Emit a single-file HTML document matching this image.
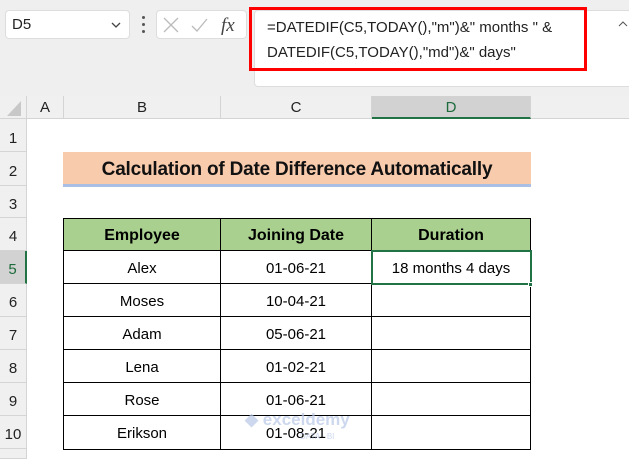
<!DOCTYPE html>
<html><head><style>
*{margin:0;padding:0;box-sizing:border-box}
body{width:629px;height:457px;overflow:hidden;background:#fff;font-family:"Liberation Sans",sans-serif;position:relative}
.a{position:absolute}
.ch{position:absolute;top:96px;height:23px;background:#f0f0f0;border-right:1px solid #d4d4d4;border-bottom:1px solid #d4d4d4;font-size:15px;color:#222;text-align:center;line-height:24px}
.rh{position:absolute;left:0;width:27px;background:#f0f0f0;border-right:1px solid #d4d4d4;border-bottom:1px solid #d4d4d4;font-size:15px;color:#222;text-align:center}
.c{position:absolute;border-right:1px solid #000;border-bottom:1px solid #000;font-size:15px;text-align:center;line-height:35px;color:#000}
</style></head><body>
<div class="a" style="left:0;top:0;width:629px;height:96px;background:#efefef"></div>
<div class="a" style="left:5px;top:10px;width:125px;height:29px;background:#fff;border:1px solid #ddd;border-radius:4px;font-size:15px;line-height:27px;padding-left:6px;color:#222">D5</div>
<svg class="a" style="left:110px;top:20px" width="12" height="10"><path d="M2 3 L6 7 L10 3" stroke="#444" stroke-width="1.3" fill="none"/></svg>
<div class="a" style="left:142px;top:16px;width:3px;height:3px;background:#555;border-radius:50%"></div>
<div class="a" style="left:142px;top:23px;width:3px;height:3px;background:#555;border-radius:50%"></div>
<div class="a" style="left:142px;top:30px;width:3px;height:3px;background:#555;border-radius:50%"></div>
<div class="a" style="left:156px;top:10px;width:91px;height:29px;background:#fff;border:1px solid #ddd;border-radius:4px"></div>
<svg class="a" style="left:160px;top:14px" width="85" height="22"><path d="M4 4 L18 18 M18 4 L4 18" stroke="#bbb" stroke-width="1.3"/><path d="M32 12 L37 17 L47 5" stroke="#bbb" stroke-width="1.3" fill="none"/><text x="61" y="17" font-family="Liberation Serif" font-style="italic" font-size="19" fill="#444">fx</text></svg>
<div class="a" style="left:254px;top:10px;width:380px;height:77px;background:#fff;border:1px solid #ddd;border-radius:4px"></div>
<div class="a" style="left:249px;top:7px;width:338px;height:64px;border:3px solid #f00"></div>
<div class="a" style="left:267px;top:15px;font-size:15px;line-height:25px;color:#222">=DATEDIF(C5,TODAY(),"m")&amp;" months " &amp;<br>DATEDIF(C5,TODAY(),"md")&amp;" days"</div>
<svg class="a" style="left:618px;top:20px" width="10" height="8"><path d="M1 6 L5 2 L9 6" stroke="#555" fill="none"/></svg>

<div class="ch" style="left:0;width:27px"><svg width="22" height="20" style="position:absolute;left:3px;top:2px"><path d="M18 3 L18 18 L4 18Z" fill="#c8c8c8"/></svg></div>
<div class="ch" style="left:27px;width:37px">A</div>
<div class="ch" style="left:64px;width:157px">B</div>
<div class="ch" style="left:221px;width:151px">C</div>
<div class="ch" style="left:372px;width:159px;background:#d2d2d2;color:#1e6b3c;border-bottom:2px solid #217346">D</div>
<div class="ch" style="left:531px;width:98px;border-right:none"></div>

<div class="rh" style="top:119px;height:33px;line-height:40px">1</div>
<div class="rh" style="top:152px;height:34px;line-height:40px">2</div>
<div class="rh" style="top:186px;height:32px;line-height:38px">3</div>
<div class="rh" style="top:218px;height:33px;line-height:38px">4</div>
<div class="rh" style="top:251px;height:33px;line-height:38px;background:#d2d2d2;color:#1e6b3c;border-right:2px solid #217346">5</div>
<div class="rh" style="top:284px;height:33px;line-height:38px">6</div>
<div class="rh" style="top:317px;height:33px;line-height:38px">7</div>
<div class="rh" style="top:350px;height:33px;line-height:38px">8</div>
<div class="rh" style="top:383px;height:33px;line-height:38px">9</div>
<div class="rh" style="top:416px;height:33px;line-height:38px">10</div>
<div class="rh" style="top:449px;height:10px"></div>

<div class="a" style="left:63px;top:152px;width:468px;height:35px;background:#f8cbad;border-bottom:3px solid #a9bfe4;font-weight:bold;font-size:19px;text-align:center;line-height:35px;color:#111;letter-spacing:-0.2px">Calculation of Date Difference Automatically</div>

<div class="a" style="left:63px;top:218px;width:468px;height:232px;border-left:1px solid #000;border-top:1px solid #000"></div>
<div class="c" style="left:64px;top:219px;width:157px;height:32px;background:#a9d08e;font-weight:bold;font-size:16px;line-height:34px">Employee</div>
<div class="c" style="left:221px;top:219px;width:151px;height:32px;background:#a9d08e;font-weight:bold;font-size:16px;line-height:34px">Joining Date</div>
<div class="c" style="left:372px;top:219px;width:159px;height:32px;background:#a9d08e;font-weight:bold;font-size:16px;line-height:34px">Duration</div>

<div class="c" style="left:64px;top:251px;width:157px;height:33px">Alex</div>
<div class="c" style="left:221px;top:251px;width:151px;height:33px">01-06-21</div>
<div class="c" style="left:372px;top:251px;width:159px;height:33px">18 months 4 days</div>
<div class="c" style="left:64px;top:284px;width:157px;height:33px">Moses</div>
<div class="c" style="left:221px;top:284px;width:151px;height:33px">10-04-21</div>
<div class="c" style="left:372px;top:284px;width:159px;height:33px"></div>
<div class="c" style="left:64px;top:317px;width:157px;height:33px">Adam</div>
<div class="c" style="left:221px;top:317px;width:151px;height:33px">05-06-21</div>
<div class="c" style="left:372px;top:317px;width:159px;height:33px"></div>
<div class="c" style="left:64px;top:350px;width:157px;height:33px">Lena</div>
<div class="c" style="left:221px;top:350px;width:151px;height:33px">01-02-21</div>
<div class="c" style="left:372px;top:350px;width:159px;height:33px"></div>
<div class="c" style="left:64px;top:383px;width:157px;height:33px">Rose</div>
<div class="c" style="left:221px;top:383px;width:151px;height:33px">01-06-21</div>
<div class="c" style="left:372px;top:383px;width:159px;height:33px"></div>
<div class="c" style="left:64px;top:416px;width:157px;height:34px">Erikson</div>
<div class="c" style="left:221px;top:416px;width:151px;height:34px">01-08-21</div>
<div class="c" style="left:372px;top:416px;width:159px;height:34px"></div>

<div class="a" style="left:371px;top:250px;width:161px;height:35px;border:2px solid #217346"></div>
<div class="a" style="left:528px;top:282px;width:5px;height:5px;background:#217346;border:1px solid #fff"></div>

<div class="a" style="left:245px;top:410px;font-size:17px;font-weight:bold;color:#b8c8e8;opacity:.7">&#9670; exceldemy</div>
<div class="a" style="left:300px;top:432px;font-size:8px;color:#b8c8e8;opacity:.7">DATA · BI</div>
</body></html>
